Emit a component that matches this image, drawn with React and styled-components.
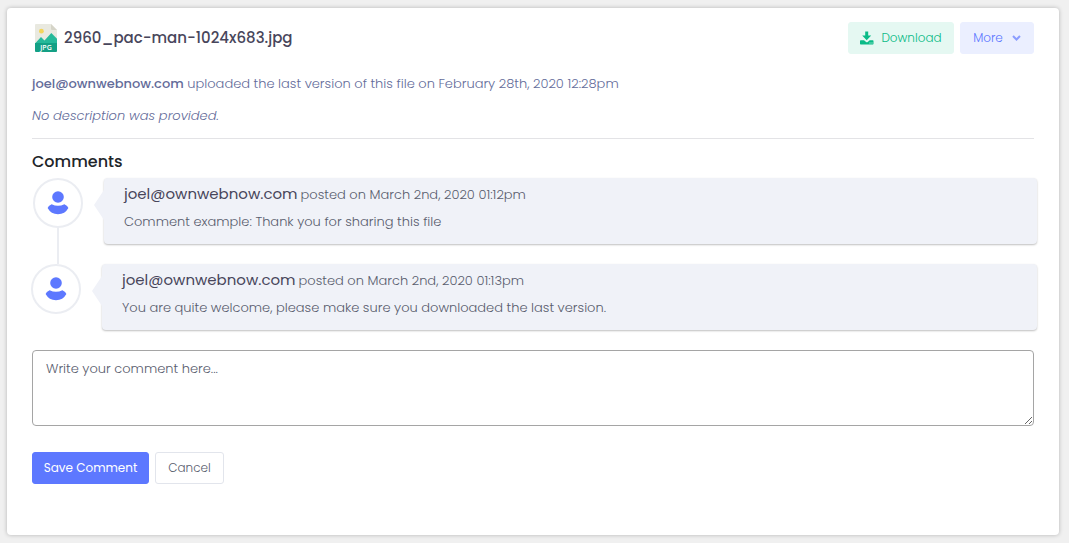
import React, { useState } from "react";
import styled, { createGlobalStyle } from "styled-components";

const GlobalStyle = createGlobalStyle`
  *, *::before, *::after { box-sizing: border-box; }
  body {
    margin: 0;
    background: #f0f0f0;
    color: #595d6e;
    font-family: Poppins, Inter, "Liberation Sans", sans-serif;
    font-size: 13px;
    font-weight: 300;
    line-height: 20px;
  }
`;

const Card = styled.main`
  margin: 8px 10px 8px 7px;
  padding: 14px 25px 51px;
  background: #fff;
  border-radius: 4px;
  box-shadow: 0 0 4px rgba(0, 0, 0, 0.25);
`;

const Header = styled.header`
  display: flex;
  align-items: center;
  justify-content: space-between;
  gap: 16px;
`;

const FileHeading = styled.div`
  display: flex;
  align-items: center;
  gap: 7px;
  padding-left: 3px;
`;

const FileName = styled.h1`
  margin: 0;
  color: #48465b;
  font-size: 15px;
  font-weight: 500;
  line-height: 24px;
`;

const Actions = styled.div`
  display: flex;
  gap: 6px;
`;

const palettes = {
  success: { fg: "#0abb87", bg: "#e5f8f2", border: "#e5f8f2", weight: 300 },
  brand: { fg: "#5d78ff", bg: "#ebefff", border: "#ebefff", weight: 300 },
  primary: { fg: "#fff", bg: "#5d78ff", border: "#5d78ff", weight: 400 },
  plain: { fg: "#595d6e", bg: "#fff", border: "#e2e5ec", weight: 300 },
};

const Button = styled.button`
  display: inline-flex;
  align-items: center;
  justify-content: center;
  gap: ${(p) => p.$gap || 7}px;
  min-width: ${(p) => p.$width}px;
  height: 32px;
  padding: 0 10px 1px;
  border: 1px solid ${(p) => palettes[p.$tone].border};
  border-radius: 3px;
  background: ${(p) => palettes[p.$tone].bg};
  color: ${(p) => palettes[p.$tone].fg};
  font-family: inherit;
  font-size: 12px;
  font-weight: ${(p) => palettes[p.$tone].weight};
  line-height: 18px;
  white-space: nowrap;
  cursor: pointer;
`;

const Meta = styled.p`
  margin: 20px 0 0;
  color: #646c9a;

  strong {
    font-weight: 500;
  }
`;

const Description = styled.p`
  margin: 12px 0 0;
  color: #646c9a;
  font-style: italic;
`;

const Divider = styled.hr`
  margin: 12px 0 11px;
  border: 0;
  border-top: 1px solid #e3e3e6;
`;

const SectionTitle = styled.h2`
  margin: 0;
  color: #212529;
  font-size: 16px;
  font-weight: 500;
  line-height: 24px;
`;

const Timeline = styled.ol`
  display: flex;
  flex-direction: column;
  gap: 20px;
  margin: 4px -3px 20px -1px;
  padding: 0;
  list-style: none;
`;

const Entry = styled.li`
  position: relative;
  display: flex;
  align-items: flex-start;
  gap: 21px;
  padding-left: ${(p) => (p.$linked ? 2 : 0)}px;

  &::before {
    content: "";
    display: ${(p) => (p.$linked ? "block" : "none")};
    position: absolute;
    top: 50px;
    bottom: -20px;
    left: 26px;
    width: 2px;
    background: #ebedf2;
  }
`;

const Avatar = styled.span`
  display: flex;
  flex: none;
  align-items: center;
  justify-content: center;
  width: 50px;
  height: 50px;
  border: 2px solid #ebedf2;
  border-radius: 50%;
  background: #fff;
`;

const Bubble = styled.article`
  position: relative;
  flex: 1;
  min-height: 66px;
  padding: 6px 20px 12px;
  border-radius: 4px;
  background: #f0f2f8;
  box-shadow: 0 1px 2px rgba(0, 0, 0, 0.25);

  &::before {
    content: "";
    position: absolute;
    top: 12px;
    left: -10px;
    border: solid transparent;
    border-width: 15px 10px 15px 0;
    border-right-color: #f0f2f8;
  }
`;

const Byline = styled.div`
  display: flex;
  align-items: baseline;
  gap: 3px;
  height: 20px;
`;

const Author = styled.strong`
  color: #48465b;
  font-size: 15px;
  font-weight: 400;
`;

const CommentText = styled.p`
  margin: 8px 0 0;
`;

const CommentForm = styled.form`
  display: flex;
  flex-direction: column;
  gap: 26px;
`;

const CommentBox = styled.textarea`
  display: block;
  width: 100%;
  height: 76px;
  padding: 8px 13px;
  border: 1px solid #a5a5a5;
  border-radius: 4px;
  background: #fff;
  color: #595d6e;
  font: inherit;
  resize: vertical;

  &::placeholder {
    color: #595d6e;
    opacity: 1;
  }
`;

function JpgIcon() {
  return (
    <svg width="22" height="28" viewBox="0 0 22 28" aria-hidden="true">
      <path d="M1 0h15l6 6v21a1 1 0 0 1-1 1H1a1 1 0 0 1-1-1V1a1 1 0 0 1 1-1Z" fill="#e9e9e0" />
      <path d="M16 0v5a1 1 0 0 0 1 1h5Z" fill="#d5d4c8" />
      <circle cx="6.4" cy="7.2" r="2.4" fill="#f3d55b" />
      <path d="M0 19.5 6 13l3.5 3.5L16.3 9l5.7 5.8V20H0Z" fill="#26b99a" />
      <path d="M0 19h22v8a1 1 0 0 1-1 1H1a1 1 0 0 1-1-1Z" fill="#14a085" />
      <text x="11" y="26.2" fill="#fff" fontFamily="Open Sans, sans-serif" fontSize="7" fontWeight="600" textAnchor="middle">
        JPG
      </text>
    </svg>
  );
}

function DownloadIcon() {
  return (
    <svg width="14" height="14" viewBox="0 0 14 14" fill="currentColor" aria-hidden="true">
      <path d="M5.2 0.5h3v4h3L6.7 9.2 2.2 4.5h3Z" />
      <path fillRule="evenodd" d="M.7 9.200H4l2.1 1.700q.8.600 1.600 0l2-1.700h3.100q.7 0 .7.700v2.900q0 .7-.7.7H.7q-.7 0-.7-.7V9.900q0-.7.7-.7ZM9.500 11.600v1h1v-1Zm2 0v1h1v-1Z" />
    </svg>
  );
}

function ChevronIcon() {
  return (
    <svg width="9" height="6" viewBox="0 0 9 6" fill="none" stroke="#8b9dff" strokeWidth="2" aria-hidden="true">
      <path d="m1 1 3.500 3.500L8 1" />
    </svg>
  );
}

function UserIcon() {
  return (
    <svg width="22" height="24" viewBox="0 0 22 24" fill="#5d78ff" aria-hidden="true">
      <circle cx="11" cy="6" r="5.800" />
      <path d="M4.600 13.200Q11 16.200 17.400 13.200 20.800 14.800 21.400 17 18 23.200 11 23.200T.6 17Q1.200 14.800 4.600 13.200Z" />
    </svg>
  );
}

const comments = [
  { id: 1, author: "joel@ownwebnow.com", posted: "March 2nd, 2020 01:12pm", text: "Comment example: Thank you for sharing this file" },
  { id: 2, author: "joel@ownwebnow.com", posted: "March 2nd, 2020 01:13pm", text: "You are quite welcome, please make sure you downloaded the last version." },
];

export default function App() {
  const [draft, setDraft] = useState("");

  return (
    <>
      <GlobalStyle />
      <Card>
        <Header>
          <FileHeading>
            <JpgIcon />
            <FileName>2960_pac-man-1024x683.jpg</FileName>
          </FileHeading>
          <Actions>
            <Button type="button" $tone="success" $width={106}>
              <DownloadIcon />
              Download
            </Button>
            <Button type="button" $tone="brand" $width={74} $gap={9} aria-haspopup="menu">
              More
              <ChevronIcon />
            </Button>
          </Actions>
        </Header>
        <Meta>
          <strong>joel@ownwebnow.com</strong> uploaded the last version of this file on February 28th, 2020 12:28pm
        </Meta>
        <Description>No description was provided.</Description>
        <Divider />
        <SectionTitle>Comments</SectionTitle>
        <Timeline>
          {comments.map((comment, i) => (
            <Entry key={comment.id} $linked={i < comments.length - 1}>
              <Avatar>
                <UserIcon />
              </Avatar>
              <Bubble>
                <Byline>
                  <Author>{comment.author}</Author>
                  <span>posted on {comment.posted}</span>
                </Byline>
                <CommentText>{comment.text}</CommentText>
              </Bubble>
            </Entry>
          ))}
        </Timeline>
        <CommentForm onSubmit={(e) => e.preventDefault()}>
          <CommentBox
            aria-label="Write your comment"
            placeholder="Write your comment here..."
            value={draft}
            onChange={(e) => setDraft(e.target.value)}
          />
          <Actions>
            <Button type="submit" $tone="primary" $width={117}>
              Save Comment
            </Button>
            <Button type="button" $tone="plain" $width={69} onClick={() => setDraft("")}>
              Cancel
            </Button>
          </Actions>
        </CommentForm>
      </Card>
    </>
  );
}
